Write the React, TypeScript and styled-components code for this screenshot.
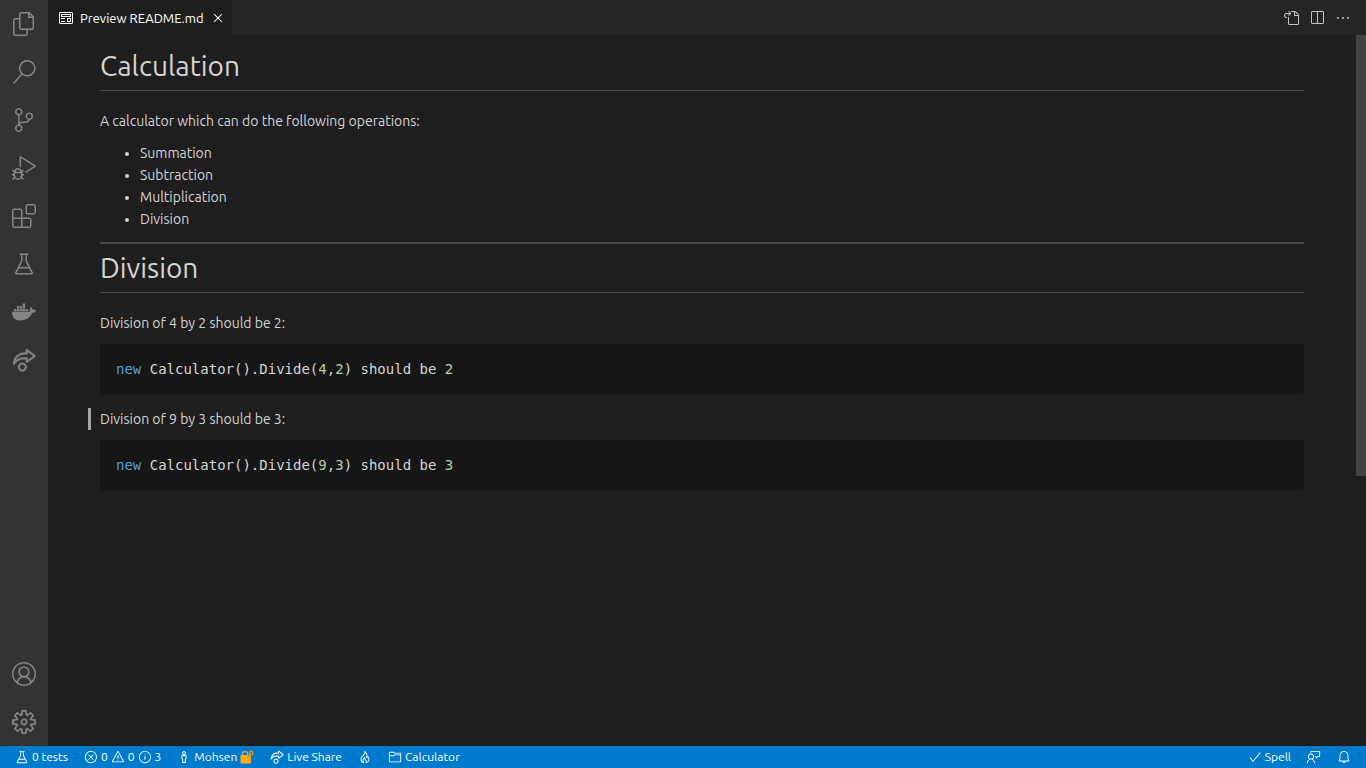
import React from "react";
import styled, { createGlobalStyle } from "styled-components";
import {
  VscFiles, VscSearch, VscSourceControl, VscDebugAlt, VscExtensions, VscBeaker, VscLiveShare,
  VscAccount, VscSettingsGear, VscPreview, VscClose, VscGoToFile, VscSplitHorizontal, VscEllipsis,
  VscError, VscWarning, VscInfo, VscFlame, VscFolder, VscCheck, VscFeedback, VscBell,
} from "react-icons/vsc";
import { FaDocker } from "react-icons/fa";

const GlobalStyle = createGlobalStyle`
  * { box-sizing: border-box; }
  body {
    margin: 0;
    background: #1e1e1e;
    color: #d4d4d4;
    font-family: Ubuntu, "Noto Sans", sans-serif;
    overflow: hidden;
  }
  button { font: inherit; color: inherit; background: none; border: 0; padding: 0; margin: 0; cursor: pointer; }
  svg { display: block; flex: none; }
`;

const Window = styled.div`
  display: flex;
  flex-direction: column;
  height: 100vh;
`;

const Workbench = styled.div`
  display: flex;
  flex: 1;
  min-height: 0;
`;

const ActivityBar = styled.nav`
  display: flex;
  flex-direction: column;
  justify-content: space-between;
  width: 48px;
  background: #333333;
`;

const ActivityGroup = styled.div`
  display: flex;
  flex-direction: column;
`;

const ActivityButton = styled.button<{ $bold?: boolean }>`
  display: flex;
  align-items: center;
  justify-content: center;
  height: 48px;
  color: #858585;

  path { stroke-width: ${(p) => (p.$bold ? "0.4" : "0")}; }
`;

const EditorArea = styled.main`
  display: flex;
  flex-direction: column;
  flex: 1;
  min-width: 0;
`;

const TabBar = styled.header`
  display: flex;
  justify-content: space-between;
  height: 35px;
  background: #252526;
`;

const Tab = styled.div`
  display: flex;
  align-items: center;
  gap: 6px;
  padding: 0 6px 0 10px;
  background: #1e1e1e;
  color: #ffffff;
  font-size: 13px;
`;

const TabClose = styled.button`
  display: flex;
  align-items: center;
`;

const EditorActions = styled.div`
  display: flex;
  align-items: center;
  gap: 10px;
  padding: 0 15px;
  color: #c5c5c5;
`;

const ActionButton = styled.button`
  display: flex;
`;

const Preview = styled.div`
  display: flex;
  flex: 1;
  min-height: 0;
`;

const Markdown = styled.article`
  flex: 1;
  min-width: 0;
  padding: 7px 52px 0;
  font-size: 14px;
  line-height: 22px;
`;

const Heading = styled.h1`
  margin: 0 0 19px;
  border-bottom: 1px solid #484848;
  font-size: 28px;
  font-weight: 400;
  line-height: 48px;
`;

const Paragraph = styled.p<{ $active?: boolean }>`
  margin: 0 0 10px -12px;
  padding-left: 9px;
  border-left: 3px solid ${(p) => (p.$active ? "#a5a5a5" : "transparent")};
`;

const List = styled.ul`
  margin: 0 0 12px;
  padding-left: 40px;
`;

const Rule = styled.hr`
  height: 2px;
  margin: 0;
  border: 0;
  background: #484848;
`;

const CodeBlock = styled.pre`
  margin: 0 0 14px;
  padding: 16px;
  border-radius: 3px;
  background: #161616;
  font-family: "DejaVu Sans Mono", monospace;
  font-size: 14px;
  line-height: 18px;
`;

const Code = styled.code`
  font: inherit;
`;

const Keyword = styled.span`
  color: #569cd6;
`;

const Num = styled.span`
  color: #b5cea8;
`;

const ScrollTrack = styled.div`
  width: 10px;
`;

const ScrollThumb = styled.div`
  height: 62%;
  background: #434343;
`;

const StatusBar = styled.footer`
  display: flex;
  justify-content: space-between;
  height: 22px;
  padding: 0 15px;
  background: #007acc;
  color: #ffffff;
  font-size: 12px;
  line-height: 22px;
`;

const StatusGroup = styled.div`
  display: flex;
  gap: 16px;
`;

const StatusItem = styled.button`
  display: flex;
  align-items: center;
  gap: 3px;
  white-space: nowrap;
`;

function PersonIcon() {
  return (
    <svg width="14" height="14" viewBox="0 0 14 14" fill="none" stroke="currentColor">
      <circle cx="7" cy="3" r="1.5" />
      <path d="M5 5.500h4v3.500h-.7v3.500H5.700V9H5z" strokeLinejoin="round" />
    </svg>
  );
}

function LockIcon() {
  return (
    <svg width="14" height="14" viewBox="0 0 14 14">
      <path d="M2.500 6V3.600Q2.500 1.500 5 1.500T7.700 3.600V6" fill="none" stroke="#a9a79b" strokeWidth="1.500" />
      <rect x="0.500" y="5" width="10.500" height="8.500" rx="1" fill="#ffad13" />
      <circle cx="11.200" cy="3" r="1.700" fill="none" stroke="#e8940c" strokeWidth="1.500" />
      <path d="M10 4.500 7.500 7.500" stroke="#e8940c" strokeWidth="1.300" />
    </svg>
  );
}

const primaryViews = [
  { label: "Explorer", Icon: VscFiles },
  { label: "Search", Icon: VscSearch },
  { label: "Source Control", Icon: VscSourceControl },
  { label: "Run and Debug", Icon: VscDebugAlt },
  { label: "Extensions", Icon: VscExtensions },
  { label: "Testing", Icon: VscBeaker },
  { label: "Docker", Icon: FaDocker },
  { label: "Live Share", Icon: VscLiveShare, bold: true },
];

const secondaryViews = [
  { label: "Accounts", Icon: VscAccount },
  { label: "Manage", Icon: VscSettingsGear },
];

const operations = ["Summation", "Subtraction", "Multiplication", "Division"];

function Divide({ a, b, result }: { a: number; b: number; result: number }) {
  return (
    <CodeBlock>
      <Code>
        <Keyword>new</Keyword> Calculator().Divide(<Num>{a}</Num>,<Num>{b}</Num>) should be <Num>{result}</Num>
      </Code>
    </CodeBlock>
  );
}

export default function App() {
  return (
    <Window>
      <GlobalStyle />
      <Workbench>
        <ActivityBar>
          <ActivityGroup>
            {primaryViews.map(({ label, Icon, bold }) => (
              <ActivityButton key={label} aria-label={label} $bold={bold}><Icon size={24} /></ActivityButton>
            ))}
          </ActivityGroup>
          <ActivityGroup>
            {secondaryViews.map(({ label, Icon }) => (
              <ActivityButton key={label} aria-label={label}><Icon size={24} /></ActivityButton>
            ))}
          </ActivityGroup>
        </ActivityBar>
        <EditorArea>
          <TabBar>
            <Tab>
              <VscPreview size={16} />
              <span>Preview README.md</span>
              <TabClose aria-label="Close"><VscClose size={16} /></TabClose>
            </Tab>
            <EditorActions>
              <ActionButton aria-label="Show Source"><VscGoToFile size={16} /></ActionButton>
              <ActionButton aria-label="Split Editor"><VscSplitHorizontal size={16} /></ActionButton>
              <ActionButton aria-label="More Actions"><VscEllipsis size={16} /></ActionButton>
            </EditorActions>
          </TabBar>
          <Preview>
            <Markdown>
              <Heading>Calculation</Heading>
              <Paragraph>A calculator which can do the following operations:</Paragraph>
              <List>
                {operations.map((name) => <li key={name}>{name}</li>)}
              </List>
              <Rule />
              <Heading>Division</Heading>
              <Paragraph>Division of 4 by 2 should be 2:</Paragraph>
              <Divide a={4} b={2} result={2} />
              <Paragraph $active>Division of 9 by 3 should be 3:</Paragraph>
              <Divide a={9} b={3} result={3} />
            </Markdown>
            <ScrollTrack><ScrollThumb /></ScrollTrack>
          </Preview>
        </EditorArea>
      </Workbench>
      <StatusBar>
        <StatusGroup>
          <StatusItem><VscBeaker size={14} /><span>0 tests</span></StatusItem>
          <StatusItem>
            <VscError size={14} /><span>0</span>
            <VscWarning size={14} /><span>0</span>
            <VscInfo size={14} /><span>3</span>
          </StatusItem>
          <StatusItem><PersonIcon /><span>Mohsen</span><LockIcon /></StatusItem>
          <StatusItem><VscLiveShare size={14} /><span>Live Share</span></StatusItem>
          <StatusItem aria-label="Hot Reload"><VscFlame size={14} /></StatusItem>
          <StatusItem><VscFolder size={14} /><span>Calculator</span></StatusItem>
        </StatusGroup>
        <StatusGroup>
          <StatusItem><VscCheck size={14} /><span>Spell</span></StatusItem>
          <StatusItem aria-label="Feedback"><VscFeedback size={14} /></StatusItem>
          <StatusItem aria-label="Notifications"><VscBell size={14} /></StatusItem>
        </StatusGroup>
      </StatusBar>
    </Window>
  );
}
